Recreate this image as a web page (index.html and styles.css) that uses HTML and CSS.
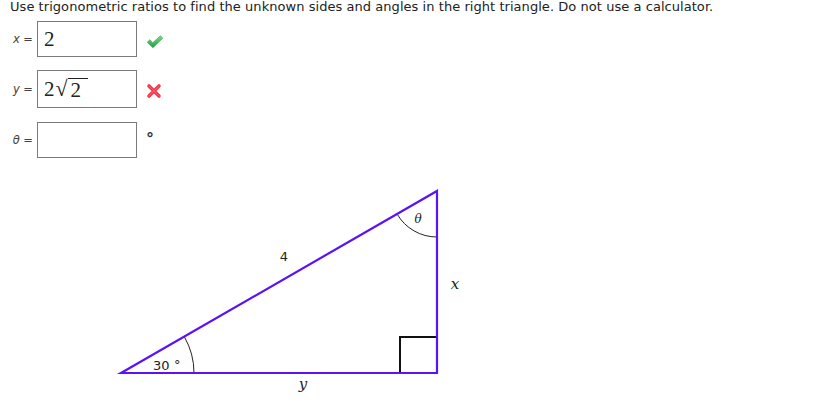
FILE: index.html
```html
<!DOCTYPE html>
<html>
<head>
<meta charset="utf-8">
<link rel="stylesheet" href="styles.css">
</head>
<body>
<div class="page">
  <p class="prompt">Use trigonometric ratios to find the unknown sides and angles in the right triangle. Do not use a calculator.</p>
  <div class="answers">
    <div class="row row-x">
      <span class="label"><i>x</i> =</span>
      <span class="box"><span class="val">2</span></span>
      <span class="status">
        <svg class="check" width="18" height="14" viewBox="0 0 18 14">
          <defs>
            <linearGradient id="g" x1="0" y1="0" x2="0" y2="1">
              <stop offset="0" stop-color="#7fdc8c"/>
              <stop offset="1" stop-color="#1f9a45"/>
            </linearGradient>
          </defs>
          <path d="M1.2 7.2 L3.9 4.7 L6.8 7.7 L14.4 0.8 L16.8 3.2 L6.9 12.8 Z" fill="url(#g)" stroke="#2aa24c" stroke-width="0.6" stroke-linejoin="round"/>
        </svg>
      </span>
    </div>
    <div class="row row-y">
      <span class="label"><i>y</i> =</span>
      <span class="box"><span class="val">2<span class="rad">√</span><span class="under">2</span></span></span>
      <span class="status">
        <svg class="cross" width="16" height="16" viewBox="0 0 16 16">
          <path d="M3 3 L13 13 M13 3 L3 13" stroke="#f23a4c" stroke-width="3.6" stroke-linecap="round"/>
          <path d="M3 3 L13 13 M13 3 L3 13" stroke="#ff7a86" stroke-width="1" stroke-linecap="round" opacity="0.6"/>
        </svg>
      </span>
    </div>
    <div class="row row-t">
      <span class="label"><i>θ</i> =</span>
      <span class="box"></span>
      <span class="status"><span class="deg">°</span></span>
    </div>
  </div>
  <svg class="figure" width="380" height="220" viewBox="0 0 380 220">
    <path d="M300 193 L300 157 L337 157" fill="none" stroke="#111" stroke-width="2"/>
    <path d="M94 193 A73 73 0 0 0 84.2 156.5" fill="none" stroke="#222" stroke-width="1"/>
    <path d="M297.1 34 A46 46 0 0 0 337 57" fill="none" stroke="#222" stroke-width="1"/>
    <path d="M21 193 L337 11 L337 193 Z" fill="none" stroke="#5a12f7" stroke-width="2.2" stroke-linejoin="miter"/>
    <text x="184" y="81" class="t-num" text-anchor="middle">4</text>
    <text x="355" y="109" class="t-var" text-anchor="middle">x</text>
    <text x="203" y="209" class="t-var" text-anchor="middle">y</text>
    <text x="318" y="43" class="t-theta" text-anchor="middle">θ</text>
    <text x="53" y="190" class="t-num">30</text>
    <text x="74" y="189" class="t-deg">°</text>
  </svg>
</div>
</body>
</html>
```

FILE: styles.css
```css
html, body {
  margin: 0;
  padding: 0;
  background: #fff;
}
.page {
  font-family: "DejaVu Sans", Verdana, sans-serif;
  color: #222;
}
.prompt {
  margin: 0;
  padding: 0 0 0 10px;
  font-size: 13px;
  letter-spacing: 0.05px;
  line-height: 14px;
  color: #222;
}
.answers {
  display: flex;
  flex-direction: column;
  margin-top: 7px;
}
.row {
  display: flex;
  align-items: center;
}
.row-y { margin-top: 13px; }
.row-t { margin-top: 14px; }
.label {
  width: 23px;
  padding-left: 10px;
  padding-right: 4px;
  text-align: right;
  font-size: 11.5px;
  color: #444;
  white-space: nowrap;
}
.label i {
  font-family: "DejaVu Sans", sans-serif;
  font-style: italic;
}
.box {
  box-sizing: border-box;
  width: 100px;
  height: 36px;
  border: 1px solid #7a7a7a;
  display: flex;
  align-items: center;
  padding-left: 6px;
}
.row-y .box { height: 38px; }
.val {
  font-family: "Liberation Serif", "Times New Roman", serif;
  font-size: 21px;
  color: #222;
  display: flex;
  align-items: flex-start;
}
.rad {
  font-size: 22px;
  margin-left: 1px;
  line-height: 24px;
}
.under {
  border-top: 1.3px solid #222;
  padding: 0 7px 0 3px;
  line-height: 22px;
  margin-top: 1px;
}
.status {
  margin-left: 9px;
  display: flex;
  align-items: center;
}
.check { display: block; margin-top: 5px; }
.cross { display: block; margin-top: 3px; }
.deg {
  font-size: 16px;
  font-weight: bold;
  color: #333;
  margin-left: 0px;
  margin-top: -3px;
}
.figure {
  display: block;
  margin: 22px 0 0 100px;
}
.t-num {
  font-family: "DejaVu Sans", sans-serif;
  font-size: 13px;
  fill: #222;
}
.t-var {
  font-family: "DejaVu Serif", serif;
  font-style: italic;
  font-size: 15px;
  fill: #222;
}
.t-theta {
  font-family: "DejaVu Serif", serif;
  font-style: italic;
  font-size: 12px;
  fill: #222;
}
.t-deg {
  font-family: "DejaVu Sans", sans-serif;
  font-size: 13px;
  fill: #222;
}
```
